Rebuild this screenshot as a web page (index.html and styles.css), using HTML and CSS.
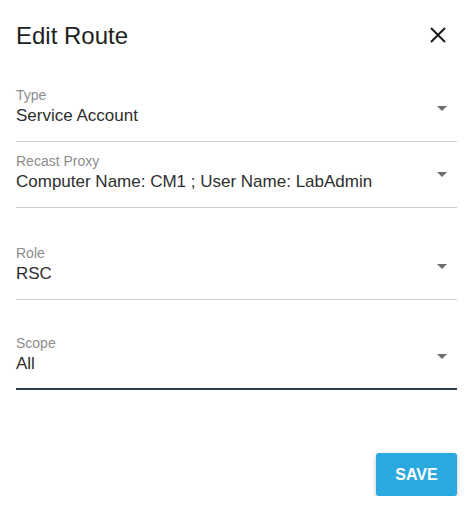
FILE: index.html
```html
<!DOCTYPE html>
<html lang="en">
<head>
<meta charset="utf-8">
<title>Edit Route</title>
<link rel="stylesheet" href="styles.css">
</head>
<body>
<div class="dialog">
  <div class="header">
    <h1 class="title">Edit Route</h1>
    <button class="close" aria-label="Close">
      <svg width="18" height="18" viewBox="0 0 18 18"><path d="M2 2 L16 16 M16 2 L2 16" stroke="#1a1a1a" stroke-width="2" fill="none"/></svg>
    </button>
  </div>
  <div class="field f1">
    <div class="content">
      <div class="label">Type</div>
      <div class="value">Service Account</div>
    </div>
    <span class="arrow"></span>
  </div>
  <div class="field f2">
    <div class="content">
      <div class="label">Recast Proxy</div>
      <div class="value">Computer Name: CM1 ; User Name: LabAdmin</div>
    </div>
    <span class="arrow"></span>
  </div>
  <div class="field f3">
    <div class="content">
      <div class="label">Role</div>
      <div class="value">RSC</div>
    </div>
    <span class="arrow"></span>
  </div>
  <div class="field f4 focused">
    <div class="content">
      <div class="label">Scope</div>
      <div class="value">All</div>
    </div>
    <span class="arrow"></span>
  </div>
  <div class="actions">
    <button class="save">SAVE</button>
  </div>
</div>
</body>
</html>
```
FILE: styles.css
```css
html, body {
  margin: 0;
  padding: 0;
  background: #ffffff;
}
body {
  font-family: "Liberation Sans", Arial, sans-serif;
}
.dialog {
  padding: 22px 17px 0 16px;
}
.header {
  display: flex;
  justify-content: space-between;
  align-items: flex-start;
}
.title {
  margin: 0;
  font-size: 24px;
  line-height: 28px;
  font-weight: 400;
  color: #1e1e1e;
}
.close {
  border: 0;
  background: none;
  padding: 0;
  margin: 4px 10px 0 0;
  width: 18px;
  height: 18px;
  display: block;
}
.close svg {
  display: block;
}
.field {
  display: flex;
  align-items: center;
  border-bottom: 1px solid #cfcfcf;
  padding-bottom: 13px;
}
.f1 { margin-top: 36px; }
.f2 { margin-top: 10px; }
.f3 { margin-top: 36px; }
.f4 { margin-top: 34px; }
.field.focused {
  border-bottom: 2px solid #2b3a47;
  padding-bottom: 12px;
}
.content {
  flex: 1;
  min-width: 0;
}
.label {
  font-size: 14px;
  line-height: 18px;
  color: #8c8c8c;
}
.value {
  font-size: 17px;
  line-height: 24px;
  color: #2e2e2e;
  white-space: nowrap;
}
.arrow {
  width: 0;
  height: 0;
  border-left: 5px solid transparent;
  border-right: 5px solid transparent;
  border-top: 5px solid #6e6e6e;
  margin: 3px 10px 0 0;
}
.actions {
  display: flex;
  justify-content: flex-end;
  margin-top: 63px;
}
.save {
  width: 81px;
  height: 43px;
  border: 0;
  border-radius: 3px;
  background: #2aa8e0;
  color: #ffffff;
  font-family: "Liberation Sans", Arial, sans-serif;
  font-size: 16px;
  font-weight: 700;
  box-shadow: 0 2px 4px rgba(0, 0, 0, 0.25);
  padding: 0;
}
```
